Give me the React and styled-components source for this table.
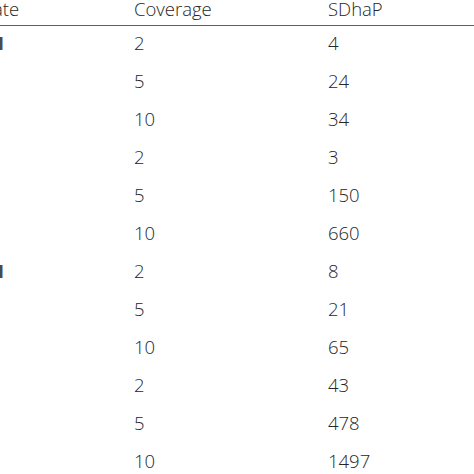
import React from "react";
import styled, { createGlobalStyle } from "styled-components";

const Global = createGlobalStyle`
  html, body { margin: 0; padding: 0; background: #ffffff; }
  body { overflow: hidden; width: 474px; height: 474px; }
`;

const Table = styled.div`
  display: grid;
  grid-template-columns: 152px 194px 1fr;
  margin-left: -18px;
  width: 520px;
  font-family: "Open Sans", "Liberation Sans", sans-serif;
  font-size: 18.5px;
  font-weight: 300;
  color: #262626;
`;

const HeadCell = styled.div`
  line-height: 18px;
  padding-bottom: 7px;
  border-bottom: 1px solid #5e5e5e;
  white-space: nowrap;
`;

const Cell = styled.div`
  line-height: 18px;
  padding-top: 8px;
  padding-bottom: 12px;
  white-space: nowrap;
  font-weight: ${(p) => (p.$strong ? 700 : 300)};
  color: ${(p) => (p.$strong ? "#4a4a4a" : "#262626")};
  margin-left: ${(p) => (p.$strong ? "-3px" : "0")};
`;

const rows = [
  ["0.1", "2", "4"],
  ["", "5", "24"],
  ["", "10", "34"],
  ["", "2", "3"],
  ["", "5", "150"],
  ["", "10", "660"],
  ["0.1", "2", "8"],
  ["", "5", "21"],
  ["", "10", "65"],
  ["", "2", "43"],
  ["", "5", "478"],
  ["", "10", "1497"],
];

export default function App() {
  return (
    <>
      <Global />
      <Table>
        <HeadCell>Rate</HeadCell>
        <HeadCell>Coverage</HeadCell>
        <HeadCell>SDhaP</HeadCell>
        {rows.map((r, i) => (
          <React.Fragment key={i}>
            <Cell $strong={!!r[0]}>{r[0]}</Cell>
            <Cell>{r[1]}</Cell>
            <Cell>{r[2]}</Cell>
          </React.Fragment>
        ))}
      </Table>
    </>
  );
}
